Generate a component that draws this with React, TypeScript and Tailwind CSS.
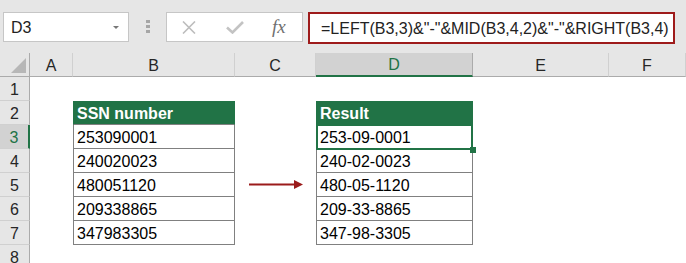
const cols = ["A", "B", "C", "D", "E", "F"];

const ssn = ["253090001", "240020023", "480051120", "209338865", "347983305"];
const result = ["253-09-0001", "240-02-0023", "480-05-1120", "209-33-8865", "347-98-3305"];

const TableCell = ({ text, header }: { text: string; header?: boolean }) => (
  <div
    className={
      header
        ? "h-[24px] bg-[#217346] border-l border-r border-b border-l-[#217346] border-r-[#217346] border-b-[#808080] flex items-end pl-[3px] text-white font-bold leading-[20px]"
        : "h-[24px] bg-white border-l border-r border-b border-[#808080] flex items-end pl-[3px] text-black leading-[20px]"
    }
  >
    {text}
  </div>
);

const Arrow = () => (
  <svg width="81" height="24" viewBox="0 0 81 24">
    <line x1="14" y1="11.5" x2="61" y2="11.5" stroke="#9b1b1b" strokeWidth="2" />
    <polygon points="59,7 68,11.5 59,16" fill="#9b1b1b" />
  </svg>
);

export default function App() {
  const rows = [1, 2, 3, 4, 5, 6, 7, 8];

  const cell = (r: number, c: string) => {
    if (c === "B" && r >= 2 && r <= 7) {
      return r === 2 ? <TableCell text="SSN number" header /> : <TableCell text={ssn[r - 3]} />;
    }
    if (c === "D" && r >= 2 && r <= 7) {
      if (r === 2) return <TableCell text="Result" header />;
      if (r === 3)
        return (
          <div className="relative">
            <TableCell text={result[0]} />
            <div className="absolute left-0 top-[-1px] w-[157px] h-[26px] border-2 border-[#217346]" />
            <div className="absolute left-[154px] top-[22px] w-[6px] h-[6px] bg-[#217346]" />
          </div>
        );
      return <TableCell text={result[r - 3]} />;
    }
    if (c === "C" && r === 5) {
      return (
        <div className="h-[24px] flex items-start">
          <Arrow />
        </div>
      );
    }
    return <div className="h-[24px]" />;
  };

  return (
    <div className="w-[686px] h-[263px] overflow-hidden bg-white text-[16px] text-black" style={{ fontFamily: '"Liberation Sans", Arial, sans-serif' }}>
      {/* formula bar */}
      <div className="h-[53px] bg-[#e6e6e6] flex items-start pt-[12px] pl-[3px]">
        <div className="w-[126px] h-[30px] bg-white border border-[#c6c6c6] flex items-center justify-between pl-[7px] pr-[9px] text-[#222]">
          <span className="leading-[20px] pt-[1px]">D3</span>
          <div className="w-0 h-0 border-l-[3px] border-r-[3px] border-t-[3px] border-l-transparent border-r-transparent border-t-[#777]" />
        </div>
        <div className="ml-[17px] mt-[8px] flex flex-col gap-[2px]">
          <div className="w-[4px] h-[3px] bg-[#a6a6a6]" />
          <div className="w-[4px] h-[3px] bg-[#a6a6a6]" />
          <div className="w-[4px] h-[3px] bg-[#a6a6a6]" />
        </div>
        <div className="ml-[16px] w-[137px] h-[30px] bg-white border border-[#c6c6c6] flex items-center pl-[15px]">
          <svg width="14" height="13" viewBox="0 0 14 13">
            <path d="M1 0.5 L13 12.5 M13 0.5 L1 12.5" stroke="#bdbdbd" strokeWidth="1.6" fill="none" />
          </svg>
          <svg className="ml-[30px]" width="18" height="13" viewBox="0 0 18 13">
            <path d="M1 6.5 L6.5 11.5 L17 1" stroke="#c3c3c3" strokeWidth="2.6" fill="none" />
          </svg>
          <span className="ml-[28px] italic text-[19px] leading-[20px] text-[#707070]" style={{ fontFamily: '"Liberation Serif", "Times New Roman", serif' }}>
            fx
          </span>
        </div>
        <div className="ml-[5px] w-[367px] h-[32px] bg-white border-2 border-[#9e1b1b] flex items-center pl-[11px] text-[#222]">
          <span className="leading-[20px] pt-[1px]">=LEFT(B3,3)&amp;"-"&amp;MID(B3,4,2)&amp;"-"&amp;RIGHT(B3,4)</span>
        </div>
      </div>

      {/* sheet */}
      <div className="grid grid-cols-[30px_43px_162px_81px_157px_136px_77px] auto-rows-[24px]">
        <div className="h-[24px] bg-[#e6e6e6] border-r border-b border-[#ababab] flex items-end justify-end pr-[3px] pb-[3px]">
          <div className="w-0 h-0" style={{ borderBottom: "15px solid #b7b7b7", borderLeft: "15px solid transparent" }} />
        </div>
        {cols.map((c) =>
          c === "D" ? (
            <div key={c} className="h-[24px] bg-[#d2d2d2] border-r border-[#ababab] border-b-2 border-b-[#217346] flex items-center justify-center text-[#217346]">
              <span className="leading-[20px] pt-[2px]">{c}</span>
            </div>
          ) : (
            <div key={c} className="h-[24px] bg-[#e6e6e6] border-r border-b border-r-[#d0d0d0] border-b-[#ababab] flex items-center justify-center text-[#262626]">
              <span className="leading-[20px] pt-[2px]">{c}</span>
            </div>
          )
        )}

        {rows.map((r) => (
          <div key={r} className="contents">
            {r === 3 ? (
              <div className="h-[24px] bg-[#d2d2d2] border-b border-b-[#d0d0d0] border-r-2 border-r-[#217346] flex items-center justify-center text-[#217346]">
                <span className="leading-[20px] pt-[2px]">{r}</span>
              </div>
            ) : (
              <div className="h-[24px] bg-[#e6e6e6] border-b border-r border-b-[#d0d0d0] border-r-[#ababab] flex items-center justify-center text-[#262626]">
                <span className="leading-[20px] pt-[2px]">{r}</span>
              </div>
            )}
            {cols.map((c) => (
              <div key={c}>{cell(r, c)}</div>
            ))}
          </div>
        ))}
      </div>
    </div>
  );
}
